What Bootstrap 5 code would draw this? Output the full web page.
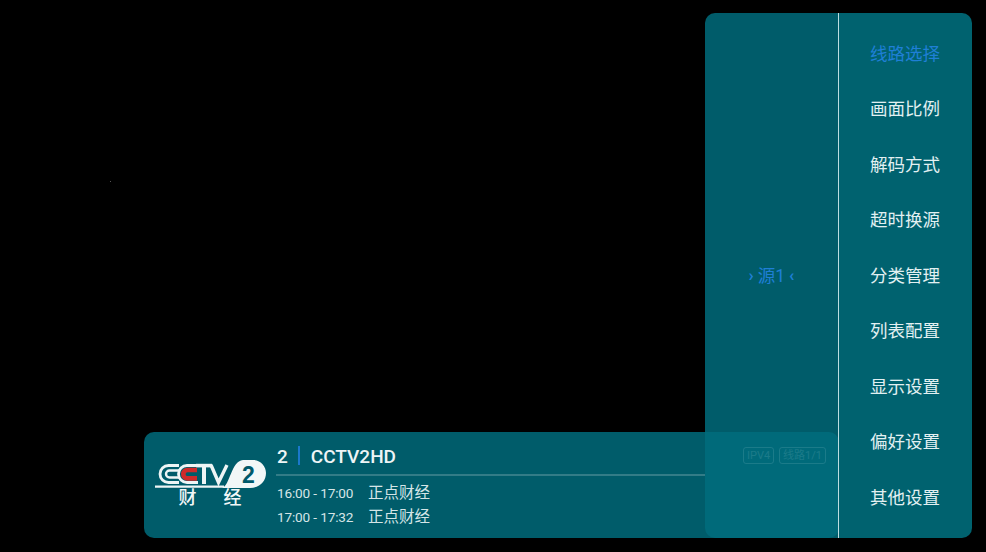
<!DOCTYPE html>
<html lang="zh-CN">
<head>
<meta charset="utf-8">
<title>TV</title>
<link href="https://cdn.jsdelivr.net/npm/bootstrap@5.3.0/dist/css/bootstrap.min.css" rel="stylesheet">
<style>
html,body{height:100%;margin:0;background:#000;overflow:hidden}
body{font-family:Roboto,"Noto Sans CJK SC",sans-serif;color:#e4f0f1}
.stage{position:relative;width:986px;height:552px;background:#000}
.speck{position:absolute;left:110px;top:181px;width:1px;height:1px;background:#555}
.info-bar{position:absolute;left:144px;top:432px;width:695px;height:106px;background:rgba(0,108,124,.85);border-radius:10px;padding-left:11px}
.logo-box{width:112px;flex:none;padding-top:27px}
.logo-box svg{display:block}
.logo-cn{font-size:18px;font-weight:500;line-height:22px;color:#f2f7f7;display:flex;justify-content:center;gap:27px;margin-top:-1px;padding-right:2px}
.info-main{margin-left:9px;flex:1;min-width:0;padding-right:13px}
.title-row{height:42px;padding-top:4px;margin-left:1px}
.chan-num,.chan-name{font-size:19px;font-weight:500;color:#eef5f6;line-height:42px;height:39px}
.chan-sep{width:2px;height:19px;background:#1b78cc;margin:0 11px 0 10px}
.tag-box{font-size:11px;line-height:15px;height:17px;padding:0 3px;border:1px solid rgba(255,255,255,.7);color:rgba(255,255,255,.7);border-radius:3px;margin-left:5px}
.rule-line{height:2px;width:429px;background:rgba(255,255,255,.2)}
.prog-list{padding-top:5px;margin-left:1px}
.prog-row{height:24px;line-height:25px;font-size:13.6px;color:#d5e5e7}
.prog-time{width:91px;letter-spacing:-.15px}
.prog-name{font-size:15.5px}
.side-panel{position:absolute;left:705px;top:13px;width:267px;height:525px;border-radius:10px;overflow:hidden}
.side-left{width:133px;flex:none;background:rgba(0,108,124,.85);color:#1f7fd6;font-size:17.5px;padding-top:1px}
.side-right{flex:1;background:#00626f;border-left:1.5px solid #bcdde1;padding:13px 0 12px}
.menu-entry{height:55.55px;font-size:17.5px;color:#e2f0f2;padding-left:31px;white-space:nowrap}
.menu-entry.is-active{color:#1f7fd6}
.src-arrow{font-size:17px;font-weight:700;margin:0 4px}
</style>
</head>
<body>
<div class="stage">
  <div class="speck"></div>

  <div class="info-bar d-flex">
    <div class="logo-box">
      <svg width="112" height="29" viewBox="155 459 112 29" fill="none" aria-label="CCTV 2">
        <g stroke="#eef5f5" fill="none">
          <path d="M179 465.500H168.500a8.500 8.500 0 0 0 0 17H179" stroke-width="2.800"/>
          <path d="M179 470.500H169.500a3.500 3.500 0 0 0 0 7H179" stroke-width="2.400"/>
          <path d="M198 465.500H187a8.500 8.500 0 0 0 0 17H198" stroke-width="2.800"/>
          <path d="M196 465.600H212" stroke-width="3.600"/>
          <path d="M204 466V484" stroke-width="4"/>
          <path d="M211 465L218.500 482.500L227 465" stroke-width="3.400"/>
        </g>
        <path d="M197 470H187.500a4.200 4.200 0 0 0 0 8.400H197" stroke="#cf2a2a" stroke-width="4.600"/>
        <path d="M155 486.600H224" stroke="#eef5f5" stroke-width="2.400"/>
        <path d="M222 488C230 486 231 461 243 460H253C261 460 266 467 266 473C266 481 260 488 250 488Z" fill="#f2f7f7"/>
        <text x="248.500" y="482.500" text-anchor="middle" font-family="Liberation Sans, sans-serif" font-weight="700" font-size="23" fill="#00596a">2</text>
      </svg>
      <div class="logo-cn"><span>财</span><span>经</span></div>
    </div>
    <div class="info-main d-flex flex-column">
      <div class="title-row d-flex align-items-center">
        <span class="chan-num">2</span>
        <span class="chan-sep"></span>
        <span class="chan-name">CCTV2HD</span>
        <span class="tag-box ms-auto">IPV4</span>
        <span class="tag-box">线路1/1</span>
      </div>
      <div class="rule-line"></div>
      <div class="prog-list">
        <div class="prog-row d-flex"><span class="prog-time">16:00 - 17:00</span><span class="prog-name">正点财经</span></div>
        <div class="prog-row d-flex"><span class="prog-time">17:00 - 17:32</span><span class="prog-name">正点财经</span></div>
      </div>
    </div>
  </div>

  <div class="side-panel d-flex">
    <div class="side-left d-flex align-items-center justify-content-center">
      <span class="src-arrow">›</span><span>源1</span><span class="src-arrow">‹</span>
    </div>
    <div class="side-right d-flex flex-column">
      <div class="menu-entry is-active d-flex align-items-center">线路选择</div>
      <div class="menu-entry d-flex align-items-center">画面比例</div>
      <div class="menu-entry d-flex align-items-center">解码方式</div>
      <div class="menu-entry d-flex align-items-center">超时换源</div>
      <div class="menu-entry d-flex align-items-center">分类管理</div>
      <div class="menu-entry d-flex align-items-center">列表配置</div>
      <div class="menu-entry d-flex align-items-center">显示设置</div>
      <div class="menu-entry d-flex align-items-center">偏好设置</div>
      <div class="menu-entry d-flex align-items-center">其他设置</div>
    </div>
  </div>
</div>
<script src="https://cdn.jsdelivr.net/npm/bootstrap@5.3.0/dist/js/bootstrap.bundle.min.js"></script>
</body>
</html>
